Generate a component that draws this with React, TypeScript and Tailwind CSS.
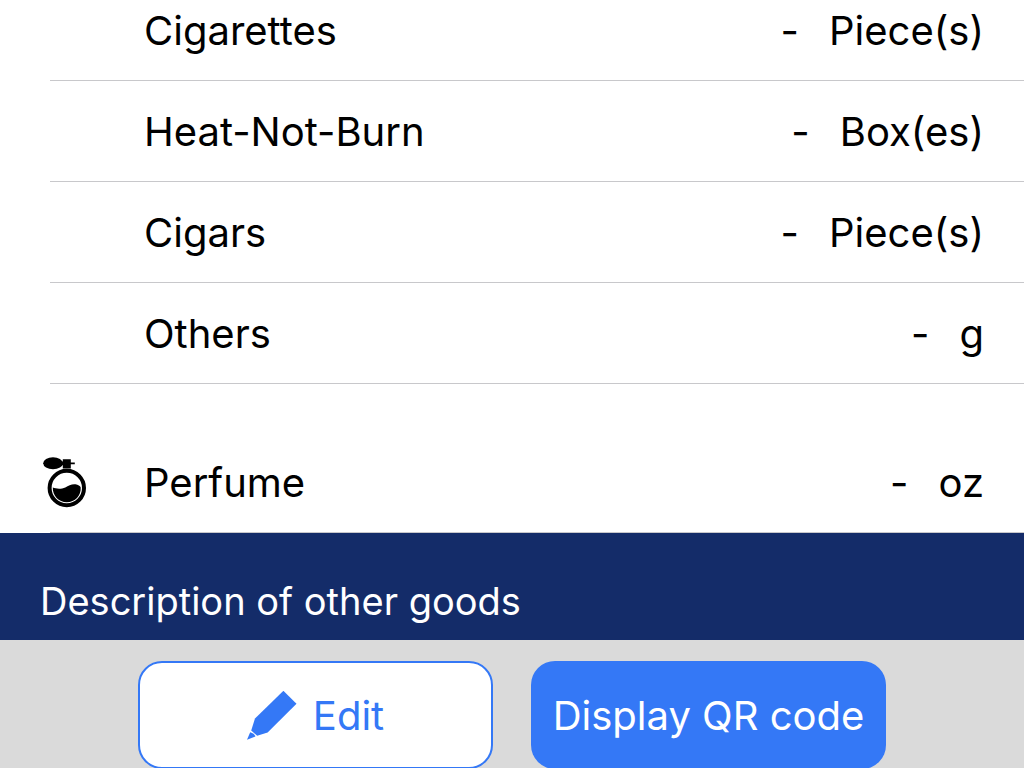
type Item = {
  label: string;
  value: string;
  unit: string;
};

const tobacco: Item[] = [
  { label: "Cigarettes", value: "-", unit: "Piece(s)" },
  { label: "Heat-Not-Burn", value: "-", unit: "Box(es)" },
  { label: "Cigars", value: "-", unit: "Piece(s)" },
  { label: "Others", value: "-", unit: "g" },
];

function PerfumeIcon() {
  return (
    <svg viewBox="0 1 50 54" className="h-[54px] w-[50px]" aria-hidden="true">
      <ellipse cx="13" cy="8.200" rx="9.800" ry="6" />
      <path d="M20 6.500h2.800V4.300h8v3.300h4v1.700h-4v4.200h-8v-3.300H20z" />
      <circle cx="26.800" cy="33" r="17.200" fill="none" stroke="#000" strokeWidth="4" />
      <path d="M12.800 32.600c3.400 1.400 8.500 1.800 12.500-.2 3.300-1.700 6.500-3.600 10.200-3.100 2.700.3 4.600 1.600 5.200 3.300.5 8.200-5.700 14.700-13.900 14.700-8 0-14.300-6.300-14-14.700z" />
    </svg>
  );
}

function PencilIcon() {
  return (
    <svg viewBox="0 1 50 50" className="size-[50px]" fill="currentColor" aria-hidden="true">
      <path d="M36.400.8 49.500 13.800 20.600 42.400 10.200 45.800 4.200 40.500 8 28.500z" />
      <path d="M3.200 42.200Q7.200 43.200 8.400 46.600L0 49.800z" />
    </svg>
  );
}

function ItemRow({ item, icon }: { item: Item; icon?: React.ReactNode }) {
  return (
    <li>
      <div className="grid h-[100px] grid-cols-[104px_1fr_auto] items-center px-10 pt-0.5">
        <span>{icon}</span>
        <span>{item.label}</span>
        <span className="flex gap-[30px]">
          <span>{item.value}</span>
          <span>{item.unit}</span>
        </span>
      </div>
      <hr className="ml-[50px] border-[#c8c8cb]" />
    </li>
  );
}

export default function App() {
  return (
    <div className="flex h-screen flex-col overflow-hidden bg-white font-['Inter',sans-serif] text-[40px] leading-[48px] text-black">
      {/* Declared goods, scrolled part way down */}
      <main className="flex min-h-0 flex-1 flex-col justify-end overflow-hidden">
        <ul>
          {tobacco.map((item) => (
            <ItemRow key={item.label} item={item} />
          ))}
        </ul>
        <ul className="pt-12">
          <ItemRow
            item={{ label: "Perfume", value: "-", unit: "oz" }}
            icon={<PerfumeIcon />}
          />
        </ul>
        <h2 className="bg-[#142c69] px-10 pt-11 pb-[15px] text-[38px] text-white">
          Description of other goods
        </h2>
      </main>

      {/* Bottom actions */}
      <footer className="grid h-32 shrink-0 grid-cols-2 gap-[38px] bg-[#dadada] px-[138px] pt-[21px]">
        <button
          type="button"
          className="flex h-[108px] items-center justify-center gap-4 rounded-3xl border-2 border-[#3478f6] bg-white pt-0.5 text-[#3478f6]"
        >
          <PencilIcon />
          Edit
        </button>
        <button
          type="button"
          className="h-[108px] rounded-3xl bg-[#3478f6] pt-0.5 whitespace-nowrap text-white"
        >
          Display QR code
        </button>
      </footer>
    </div>
  );
}
